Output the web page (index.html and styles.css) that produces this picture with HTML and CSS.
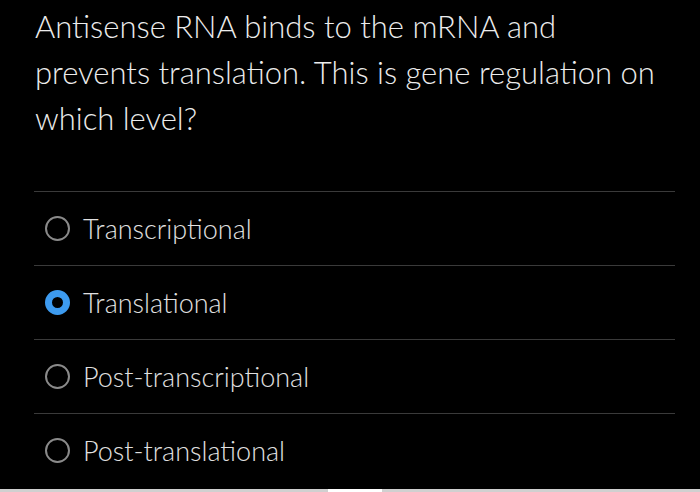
FILE: index.html
```html
<!DOCTYPE html>
<html>
<head>
<meta charset="utf-8">
<link rel="stylesheet" href="styles.css">
</head>
<body>
<div class="page">
  <p class="question">Antisense RNA binds to the mRNA and<br>prevents translation. This is gene regulation on<br>which level?</p>
  <ul class="options">
    <li class="option"><span class="radio"></span><span class="label">Transcriptional</span></li>
    <li class="option"><span class="radio checked"></span><span class="label">Translational</span></li>
    <li class="option"><span class="radio"></span><span class="label">Post-transcriptional</span></li>
    <li class="option"><span class="radio"></span><span class="label">Post-translational</span></li>
  </ul>
  <div class="footer-bar"><span class="thumb"></span></div>
</div>
</body>
</html>
```
FILE: styles.css
```css
html, body {
  margin: 0;
  padding: 0;
  background: #000;
}
.page {
  width: 700px;
  height: 492px;
  display: flex;
  flex-direction: column;
  font-family: "Lato Light", Lato, "Open Sans", sans-serif;
  font-weight: 300;
  color: #eeeeee;
  overflow: hidden;
}
.question {
  margin: 0;
  padding: 3px 0 0 35px;
  font-size: 31px;
  line-height: 46px;
  color: #ececec;
}
.options {
  list-style: none;
  margin: 50px 25px 0 34px;
  padding: 0;
}
.option {
  height: 73px;
  border-top: 1px solid #3a3a3a;
  display: flex;
  align-items: center;
  gap: 13px;
  padding-left: 11px;
}
.radio {
  width: 21px;
  height: 21px;
  border: 2px solid #8a8a8a;
  border-radius: 50%;
  box-sizing: content-box;
  flex: none;
}
.radio.checked {
  width: 11px;
  height: 11px;
  border: 7px solid #3d9bf0;
  background: #000;
}
.label {
  font-size: 27px;
  color: #e0e0e0;
}
.footer-bar {
  margin-top: auto;
  height: 3px;
  background: #d0d0d0;
  position: relative;
}
.thumb {
  position: absolute;
  left: 328px;
  width: 54px;
  top: 0;
  bottom: 0;
  background: #fff;
}
```
